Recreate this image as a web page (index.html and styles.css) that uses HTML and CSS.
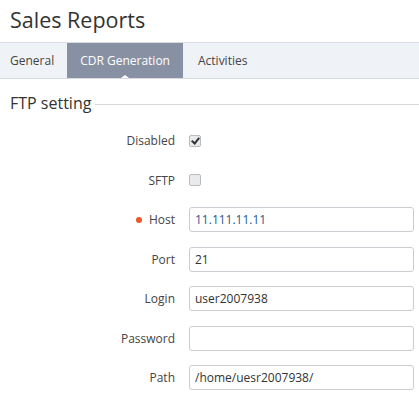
FILE: index.html
```html
<html>
    <head>
        <meta name="viewport" content="width=device-width, initial-scale=1.0">
        <link rel="stylesheet" href="styles.css">
    </head>
    <body>
        <h1 class="title">Sales Reports</h1>

        <div class="tabs">
            <div class="tab">General</div>
            <div class="tab active">CDR Generation</div>
            <div class="tab">Activities</div>
        </div>

        <div class="section">
            <div class="section-title">FTP setting</div>
            <div class="form">
                <div class="row">
                    <label for="disabled">Disabled</label>
                    <div class="field"><input type="checkbox" id="disabled" checked></div>
                </div>
                <div class="row">
                    <label for="sftp">SFTP</label>
                    <div class="field"><input type="checkbox" id="sftp"></div>
                </div>
                <div class="row">
                    <label for="host" class="required">Host</label>
                    <div class="field"><input type="text" id="host" class="host" value="11.111.11.11"></div>
                </div>
                <div class="row">
                    <label for="port">Port</label>
                    <div class="field"><input type="text" id="port" value="21"></div>
                </div>
                <div class="row">
                    <label for="login">Login</label>
                    <div class="field"><input type="text" id="login" value="user2007938"></div>
                </div>
                <div class="row">
                    <label for="password">Password</label>
                    <div class="field"><input type="password" id="password"></div>
                </div>
                <div class="row">
                    <label for="path">Path</label>
                    <div class="field"><input type="text" id="path" value="/home/uesr2007938/"></div>
                </div>
            </div>
        </div>
    </body>
</html>
```

FILE: styles.css
```css
html, body {
    margin: 0;
    padding: 0;
    font-family: "Open Sans", sans-serif;
    font-size: 12px;
    color: #444;
    background: #fff;
}
.title {
    margin: 0;
    padding: 5px 10px 0 10px;
    height: 37px;
    font-size: 21.5px;
    font-weight: normal;
    color: #333;
    line-height: 30px;
}
.tabs {
    display: flex;
    height: 35px;
    background: #eff3f7;
    border-top: 1px solid #d8dce2;
    border-bottom: 1px solid #d8dce2;
}
.tab {
    position: relative;
    display: flex;
    align-items: center;
    padding: 0 13px;
    color: #444;
}
.tab:first-child {
    padding-left: 10px;
    padding-right: 13px;
}
.tab.active {
    background: #8891a3;
    color: #fff;
}
.tab.active + .tab {
    padding-left: 15px;
}
.tab.active::after {
    content: "";
    position: absolute;
    left: 50%;
    bottom: 0;
    margin-left: -4px;
    border-left: 4px solid transparent;
    border-right: 4px solid transparent;
    border-bottom: 3px solid #fff;
}
.section {
    padding: 0 0 0 10px;
}
.section-title {
    display: flex;
    align-items: center;
    margin-top: 12px;
    font-size: 16px;
    color: #333;
    line-height: 24px;
}
.section-title::after {
    content: "";
    flex: 1;
    height: 1px;
    margin-left: 4px;
    margin-top: 3px;
    background: #d8d8d8;
}
.form {
    display: flex;
    flex-direction: column;
    gap: 14.5px;
    margin-top: 13px;
}
.row {
    display: flex;
    align-items: center;
    height: 25px;
}
.row label {
    width: 165px;
    text-align: right;
    padding-right: 14px;
}
.required::before {
    content: "";
    display: inline-block;
    width: 6px;
    height: 6px;
    border-radius: 50%;
    background: #e8582b;
    margin-right: 7px;
    vertical-align: 1px;
}
.field {
    flex: 1;
    padding-right: 5px;
}
input[type=text], input[type=password] {
    box-sizing: border-box;
    width: 100%;
    height: 25px;
    padding: 0 5px;
    border: 1px solid #c9cdd2;
    border-radius: 3px;
    font-family: "Open Sans", sans-serif;
    font-size: 12px;
    color: #333;
    outline: none;
}
input.host {
    color: #1f5b8f;
}
input[type=checkbox] {
    appearance: none;
    -webkit-appearance: none;
    display: block;
    margin: 0;
    width: 12px;
    height: 12px;
    border: 1px solid #b9bcc0;
    border-radius: 2px;
    background: #e9eaeb;
    position: relative;
}
input[type=checkbox]:checked::after {
    content: "";
    position: absolute;
    left: 3px;
    top: 0px;
    width: 3px;
    height: 6px;
    border-right: 2px solid #333;
    border-bottom: 2px solid #333;
    transform: rotate(40deg);
}
```
